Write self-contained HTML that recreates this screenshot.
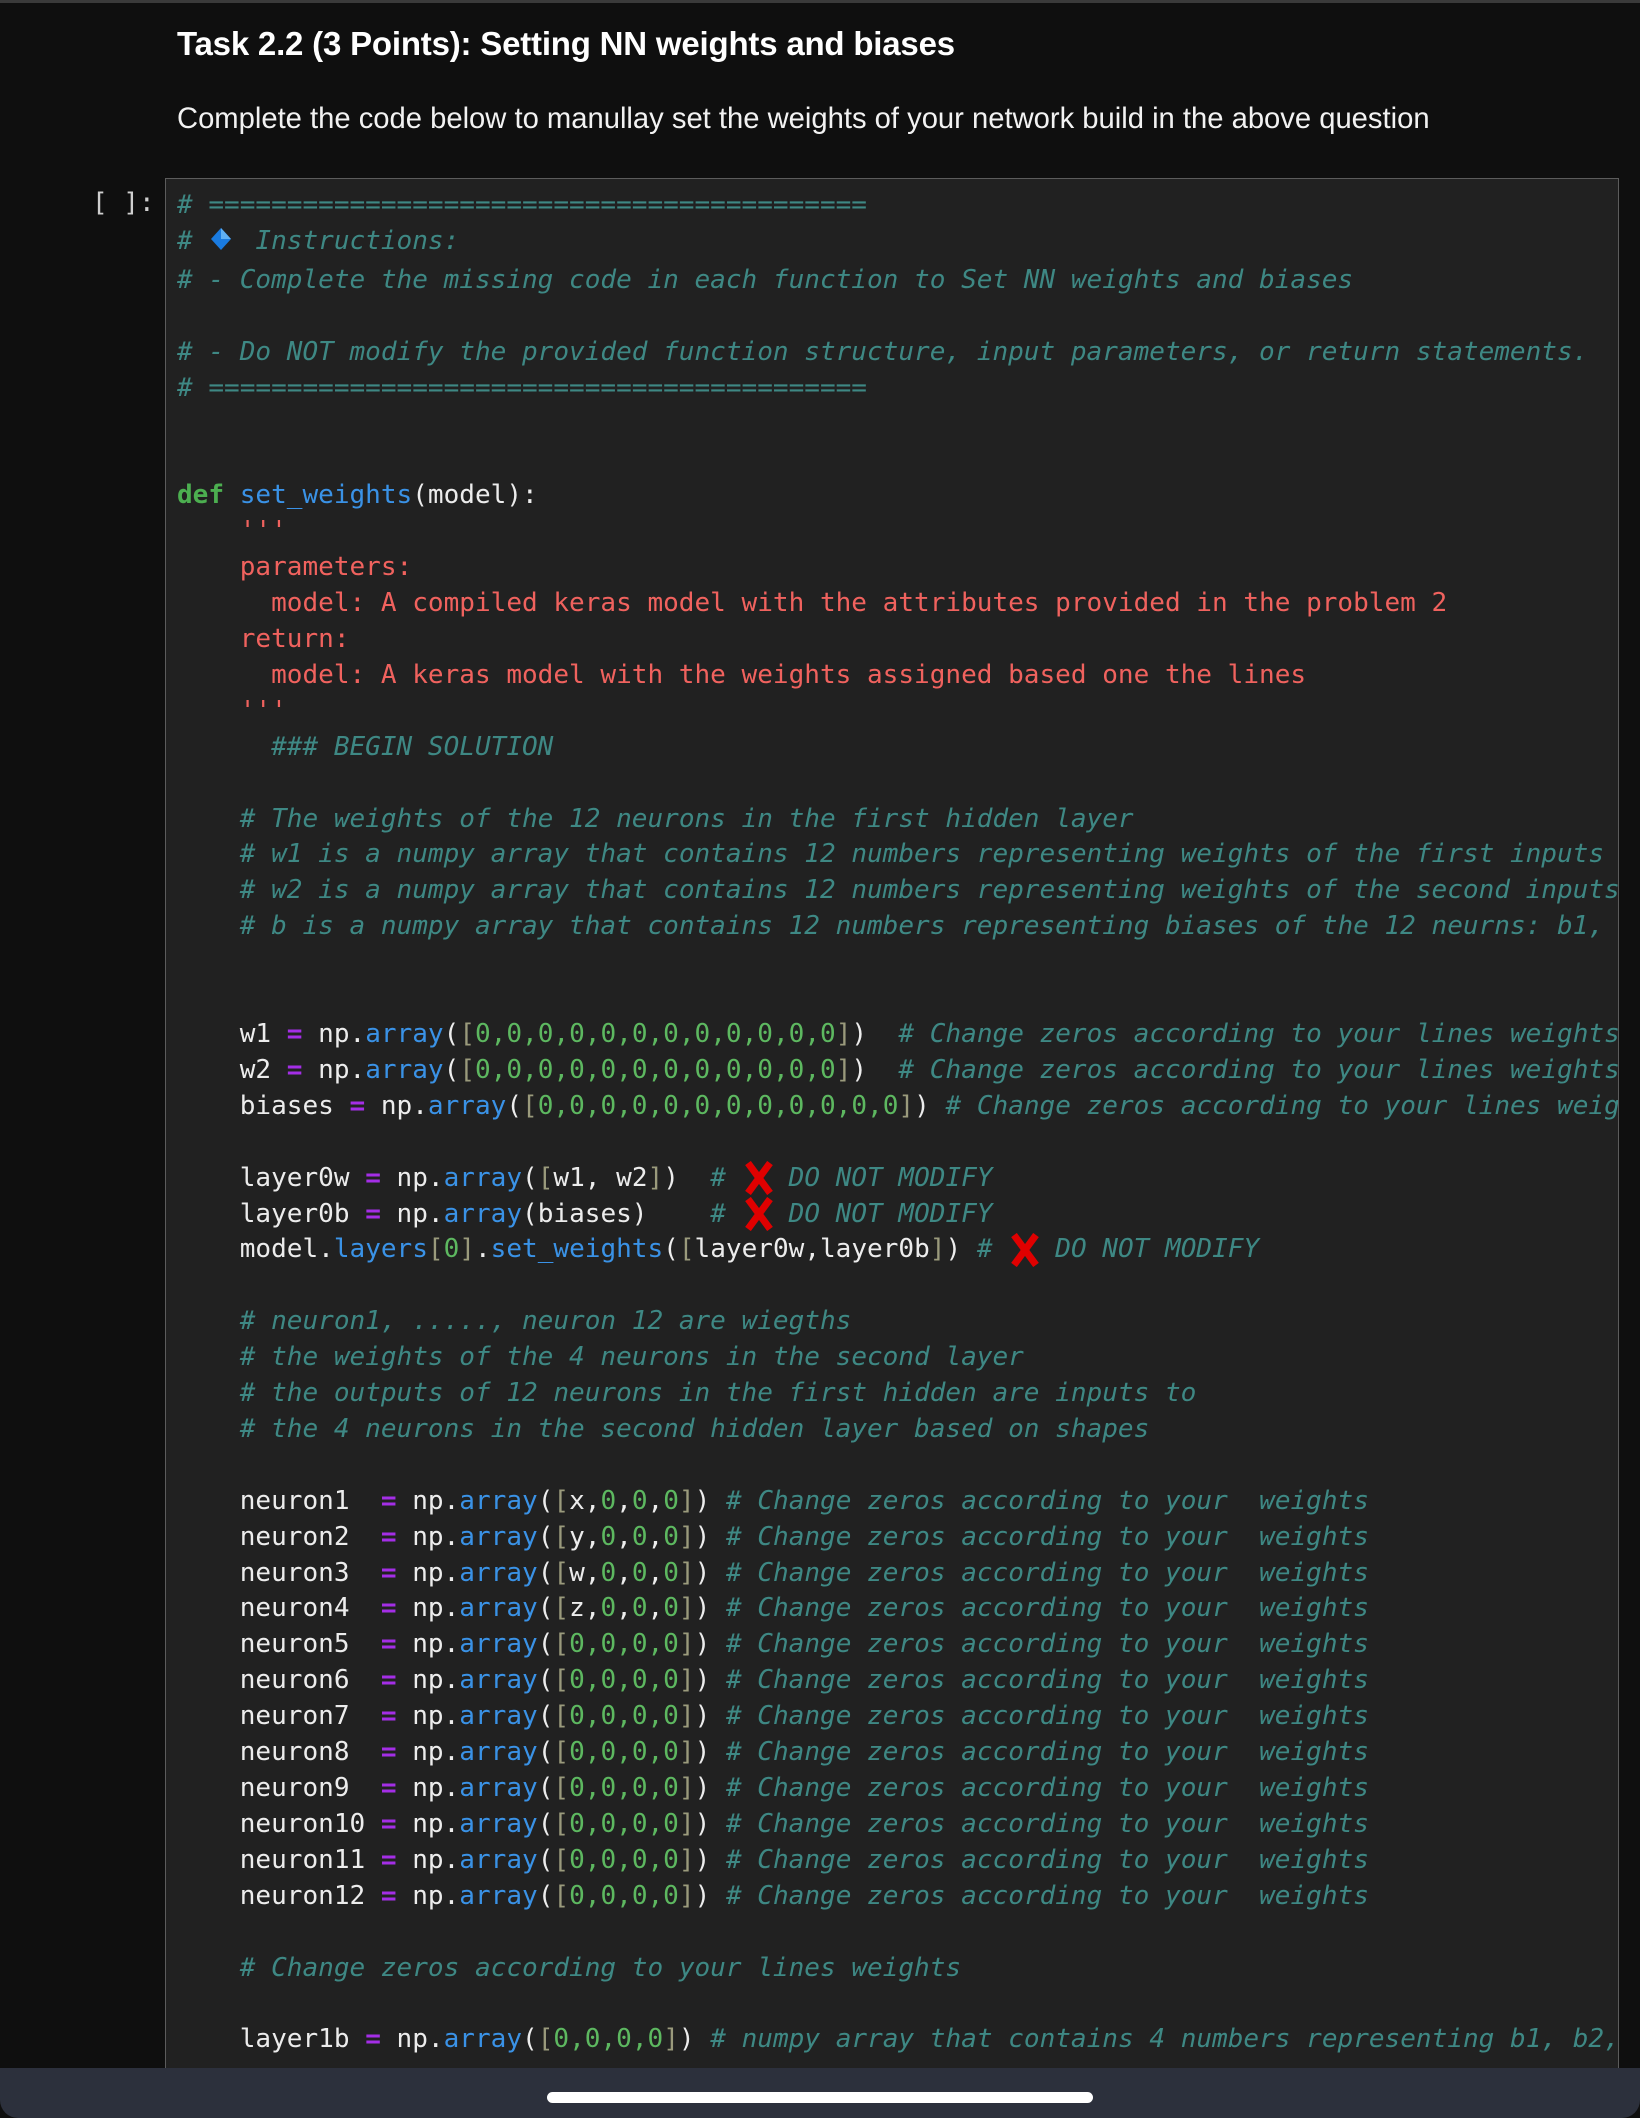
<!DOCTYPE html>
<html><head><meta charset="utf-8"><style>
html,body{margin:0;padding:0}
body{width:1640px;height:2118px;background:#0f0f0f;position:relative;overflow:hidden;font-family:"Liberation Sans",sans-serif}
.topline{position:absolute;left:0;top:0;width:1640px;height:3px;background:#3a3a3a}
h1{position:absolute;left:177px;top:25px;margin:0;font-size:33px;font-weight:bold;color:#fff;letter-spacing:-0.2px}
p{position:absolute;left:177px;top:103px;margin:0;font-size:29.2px;color:#f2f2f2}
.prompt{position:absolute;left:92px;top:188px;font-family:"DejaVu Sans Mono",monospace;font-size:26px;color:#cfcfcf}
.box{position:absolute;left:165px;top:178px;width:1452px;height:1900px;background:#212121;border:1px solid #5c5c5c;overflow:hidden}
pre{margin:0;padding:9px 0 0 11px;font-family:"DejaVu Sans Mono",monospace;font-size:26.05px;line-height:35.9px;color:#ececec;white-space:pre}
.c{color:#3e8884;font-style:italic}
.k{color:#4caf50;font-weight:bold}
.f{color:#3a92e6}
.s{color:#f0625e}
.o{color:#a42ee6;font-weight:bold}
.n{color:#5db860}
.b{color:#9a9a7c}
.x{display:inline-block;width:2ch;height:1em;vertical-align:-0.15em;position:relative}
.x svg{position:absolute;left:2px;top:-2px}
.d{display:inline-block;width:2ch;vertical-align:-0.12em}
.bar{position:absolute;left:0;top:2068px;width:1640px;height:50px;background:#2c303c;border-radius:0 0 18px 18px}
.pill{position:absolute;left:547px;top:2092px;width:546px;height:11px;background:#fff;border-radius:6px}
</style></head><body>
<div class="topline"></div>
<h1>Task 2.2 (3 Points): Setting NN weights and biases</h1>
<p>Complete the code below to manullay set the weights of your network build in the above question</p>
<div class="prompt">[ ]:</div>
<div class="box"><pre><span class="c"># ==========================================</span>
<span class="c"># <span class="d"><svg width="26" height="26" viewBox="0 0 26 26"><path d="M13 2 L23 13 L13 24 L3 13 Z" fill="#1a7be0"/><path d="M13 2 L23 13 L13 13 Z" fill="#5fb0f5"/></svg></span> Instructions:</span>
<span class="c"># - Complete the missing code in each function to Set NN weights and biases</span>

<span class="c"># - Do NOT modify the provided function structure, input parameters, or return statements.</span>
<span class="c"># ==========================================</span>


<span class="k">def</span> <span class="f">set_weights</span>(model):
    <span class="s">'''</span>
<span class="s">    parameters:</span>
<span class="s">      model: A compiled keras model with the attributes provided in the problem 2</span>
<span class="s">    return:</span>
<span class="s">      model: A keras model with the weights assigned based one the lines</span>
<span class="s">    '''</span>
      <span class="c">### BEGIN SOLUTION</span>

    <span class="c"># The weights of the 12 neurons in the first hidden layer</span>
    <span class="c"># w1 is a numpy array that contains 12 numbers representing weights of the first inputs</span>
    <span class="c"># w2 is a numpy array that contains 12 numbers representing weights of the second inputs</span>
    <span class="c"># b is a numpy array that contains 12 numbers representing biases of the 12 neurns: b1,</span>


    w1 <span class="o">=</span> np.<span class="f">array</span>(<span class="b">[</span><span class="n">0,0,0,0,0,0,0,0,0,0,0,0</span><span class="b">]</span>)  <span class="c"># Change zeros according to your lines weights</span>
    w2 <span class="o">=</span> np.<span class="f">array</span>(<span class="b">[</span><span class="n">0,0,0,0,0,0,0,0,0,0,0,0</span><span class="b">]</span>)  <span class="c"># Change zeros according to your lines weights</span>
    biases <span class="o">=</span> np.<span class="f">array</span>(<span class="b">[</span><span class="n">0,0,0,0,0,0,0,0,0,0,0,0</span><span class="b">]</span>) <span class="c"># Change zeros according to your lines weights</span>

    layer0w <span class="o">=</span> np.<span class="f">array</span>(<span class="b">[</span>w1, w2<span class="b">]</span>)  <span class="c"># <span class="x"><svg width="30" height="34" viewBox="0 0 30 34"><path d="M4 2 L26 32 M26 2 L4 32" stroke="#e00000" stroke-width="7"/></svg></span> DO NOT MODIFY</span>
    layer0b <span class="o">=</span> np.<span class="f">array</span>(biases)    <span class="c"># <span class="x"><svg width="30" height="34" viewBox="0 0 30 34"><path d="M4 2 L26 32 M26 2 L4 32" stroke="#e00000" stroke-width="7"/></svg></span> DO NOT MODIFY</span>
    model.<span class="f">layers</span><span class="b">[</span><span class="n">0</span><span class="b">]</span>.<span class="f">set_weights</span>(<span class="b">[</span>layer0w,layer0b<span class="b">]</span>) <span class="c"># <span class="x"><svg width="30" height="34" viewBox="0 0 30 34"><path d="M4 2 L26 32 M26 2 L4 32" stroke="#e00000" stroke-width="7"/></svg></span> DO NOT MODIFY</span>

    <span class="c"># neuron1, ....., neuron 12 are wiegths</span>
    <span class="c"># the weights of the 4 neurons in the second layer</span>
    <span class="c"># the outputs of 12 neurons in the first hidden are inputs to</span>
    <span class="c"># the 4 neurons in the second hidden layer based on shapes</span>

    neuron1  <span class="o">=</span> np.<span class="f">array</span>(<span class="b">[</span>x,<span class="n">0</span>,<span class="n">0</span>,<span class="n">0</span><span class="b">]</span>) <span class="c"># Change zeros according to your  weights</span>
    neuron2  <span class="o">=</span> np.<span class="f">array</span>(<span class="b">[</span>y,<span class="n">0</span>,<span class="n">0</span>,<span class="n">0</span><span class="b">]</span>) <span class="c"># Change zeros according to your  weights</span>
    neuron3  <span class="o">=</span> np.<span class="f">array</span>(<span class="b">[</span>w,<span class="n">0</span>,<span class="n">0</span>,<span class="n">0</span><span class="b">]</span>) <span class="c"># Change zeros according to your  weights</span>
    neuron4  <span class="o">=</span> np.<span class="f">array</span>(<span class="b">[</span>z,<span class="n">0</span>,<span class="n">0</span>,<span class="n">0</span><span class="b">]</span>) <span class="c"># Change zeros according to your  weights</span>
    neuron5  <span class="o">=</span> np.<span class="f">array</span>(<span class="b">[</span><span class="n">0,0,0,0</span><span class="b">]</span>) <span class="c"># Change zeros according to your  weights</span>
    neuron6  <span class="o">=</span> np.<span class="f">array</span>(<span class="b">[</span><span class="n">0,0,0,0</span><span class="b">]</span>) <span class="c"># Change zeros according to your  weights</span>
    neuron7  <span class="o">=</span> np.<span class="f">array</span>(<span class="b">[</span><span class="n">0,0,0,0</span><span class="b">]</span>) <span class="c"># Change zeros according to your  weights</span>
    neuron8  <span class="o">=</span> np.<span class="f">array</span>(<span class="b">[</span><span class="n">0,0,0,0</span><span class="b">]</span>) <span class="c"># Change zeros according to your  weights</span>
    neuron9  <span class="o">=</span> np.<span class="f">array</span>(<span class="b">[</span><span class="n">0,0,0,0</span><span class="b">]</span>) <span class="c"># Change zeros according to your  weights</span>
    neuron10 <span class="o">=</span> np.<span class="f">array</span>(<span class="b">[</span><span class="n">0,0,0,0</span><span class="b">]</span>) <span class="c"># Change zeros according to your  weights</span>
    neuron11 <span class="o">=</span> np.<span class="f">array</span>(<span class="b">[</span><span class="n">0,0,0,0</span><span class="b">]</span>) <span class="c"># Change zeros according to your  weights</span>
    neuron12 <span class="o">=</span> np.<span class="f">array</span>(<span class="b">[</span><span class="n">0,0,0,0</span><span class="b">]</span>) <span class="c"># Change zeros according to your  weights</span>

    <span class="c"># Change zeros according to your lines weights</span>

    layer1b <span class="o">=</span> np.<span class="f">array</span>(<span class="b">[</span><span class="n">0,0,0,0</span><span class="b">]</span>) <span class="c"># numpy array that contains 4 numbers representing b1, b2, b3</span>
</pre></div>
<div class="bar"></div>
<div class="pill"></div>
</body></html>
